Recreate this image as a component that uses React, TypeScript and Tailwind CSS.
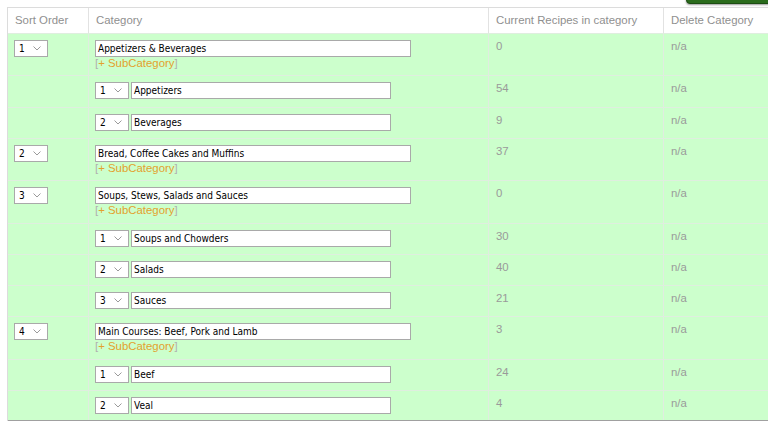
import React from "react";

type Row = { kind: "main" | "sub"; order: number; name: string; count: number; h: string };

const rows: Row[] = [
  { kind: "main", order: 1, name: "Appetizers & Beverages", count: 0, h: "h-[42px]" },
  { kind: "sub", order: 1, name: "Appetizers", count: 54, h: "h-[32px]" },
  { kind: "sub", order: 2, name: "Beverages", count: 9, h: "h-[31px]" },
  { kind: "main", order: 2, name: "Bread, Coffee Cakes and Muffins", count: 37, h: "h-[42px]" },
  { kind: "main", order: 3, name: "Soups, Stews, Salads and Sauces", count: 0, h: "h-[43px]" },
  { kind: "sub", order: 1, name: "Soups and Chowders", count: 30, h: "h-[31px]" },
  { kind: "sub", order: 2, name: "Salads", count: 40, h: "h-[31px]" },
  { kind: "sub", order: 3, name: "Sauces", count: 21, h: "h-[31px]" },
  { kind: "main", order: 4, name: "Main Courses: Beef, Pork and Lamb", count: 3, h: "h-[43px]" },
  { kind: "sub", order: 1, name: "Beef", count: 24, h: "h-[31px]" },
  { kind: "sub", order: 2, name: "Veal", count: 4, h: "h-[31px]" },
];

function Select({ value }: { value: number }) {
  return (
    <div className="flex h-[17px] w-[34px] shrink-0 items-center justify-between border border-[#a9a9a9] bg-white pl-[4px] pr-[6px] text-[10px] leading-none text-black [font-family:'DejaVu_Sans_Condensed','DejaVu_Sans',sans-serif]">
      <span>{value}</span>
      <svg width="8" height="5" viewBox="0 0 8 5" fill="none">
        <path d="M0.5 0.5 L4 4 L7.5 0.5" stroke="#9a9a9a" strokeWidth="1" />
      </svg>
    </div>
  );
}

function TextBox({ value, w }: { value: string; w: string }) {
  return (
    <div
      className={`flex h-[17px] ${w} items-center border border-[#a9a9a9] bg-white pl-[2px] text-[10px] leading-none text-black [font-family:'DejaVu_Sans_Condensed','DejaVu_Sans',sans-serif]`}
    >
      {value}
    </div>
  );
}

export default function App() {
  return (
    <div className="relative h-[424px] w-[768px] overflow-hidden bg-white [font-family:'Liberation_Sans',Arial,sans-serif]">
      <div className="absolute left-[686px] top-[-12px] h-[16px] w-[100px] rounded-[4px] border border-[#1c4d12] bg-[#2a6b1c] shadow-[0_1px_2px_rgba(0,0,0,0.4)]" />
      <div className="pl-[7px] pt-[7px]">
        <div className="w-[820px] border-l border-t border-[#dcdcdc]">
          <div className="flex h-[25px] bg-white text-[11.4px] leading-[14px] text-[#8f8f8f]">
            <div className="w-[81px] border-r border-[#e2e2e2] pl-[7px] pt-[5px]">Sort Order</div>
            <div className="w-[400px] border-r border-[#e2e2e2] pl-[7px] pt-[5px]">Category</div>
            <div className="w-[175px] border-r border-[#e2e2e2] pl-[7px] pt-[5px]">Current Recipes in category</div>
            <div className="flex-1 pl-[7px] pt-[5px]">Delete Category</div>
          </div>
          {rows.map((r, i) => (
            <div
              key={i}
              className={`flex bg-[#ccffcc] text-[11.4px] leading-[14px] text-[#9a9a9a] border-t border-[#dfeedf] ${r.h} ${
                i === rows.length - 1 ? "border-b border-b-[#a0a0a0]" : ""
              }`}
            >
              <div className="w-[81px] border-r border-[#e0ece0] pl-[6px] pt-[6px]">
                {r.kind === "main" && <Select value={r.order} />}
              </div>
              <div className="w-[400px] border-r border-[#e0ece0] pl-[6px] pt-[6px]">
                {r.kind === "main" ? (
                  <div className="flex flex-col">
                    <TextBox value={r.name} w="w-[316px]" />
                    <div className="text-[11.4px] leading-[12px] text-[#b0b0b0]">
                      [<span className="text-[#e3a12e]">+ SubCategory</span>]
                    </div>
                  </div>
                ) : (
                  <div className="flex gap-[2px]">
                    <Select value={r.order} />
                    <TextBox value={r.name} w="w-[260px]" />
                  </div>
                )}
              </div>
              <div className="w-[175px] border-r border-[#e0ece0] pl-[7px] pt-[5px]">{r.count}</div>
              <div className="flex-1 pl-[7px] pt-[5px]">n/a</div>
            </div>
          ))}
        </div>
      </div>
    </div>
  );
}
